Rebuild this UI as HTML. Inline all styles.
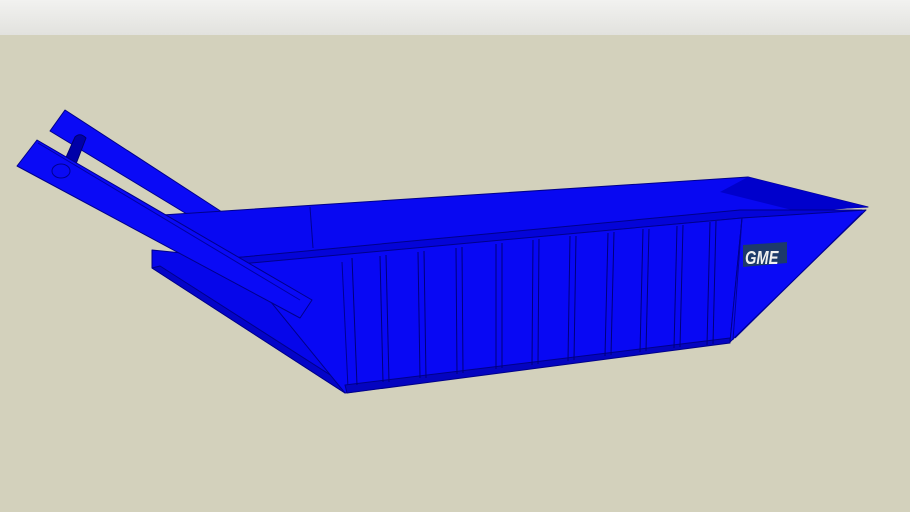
<!DOCTYPE html>
<html><head><meta charset="utf-8"><style>
html,body{margin:0;padding:0;width:910px;height:512px;overflow:hidden;background:#d3d1bc}
svg{display:block}
</style></head><body>
<svg width="910" height="512" viewBox="0 0 910 512" xmlns="http://www.w3.org/2000/svg">
<defs><linearGradient id="sky" x1="0" y1="0" x2="0" y2="1"><stop offset="0" stop-color="#f2f2f0"/><stop offset="1" stop-color="#e2e2de"/></linearGradient></defs>
<rect width="910" height="512" fill="#d3d1bc"/>
<rect width="910" height="35" fill="url(#sky)"/>
<g stroke="#00008a" stroke-width="1" stroke-linejoin="round">
<polygon points="65,110 50,131 200,222 222,212" fill="#0a0af6"/>
<path d="M64,162 L75,137 Q80,132 86,138 L76,164 Z" fill="#0000a8" stroke="#000070"/>
<polygon points="162,215 748,177 868,207 740,213 232,258 175,240" fill="#0808f2"/>
<polygon points="748,177 868,207 800,212 720,192" fill="#0000cc" stroke="none"/>
<line x1="310" y1="207" x2="313" y2="248" stroke="#000090"/>
<polygon points="152,250 152,268 345,393 345,375 232,258" fill="#0606ea"/>
<polygon points="152,268 345,393 346,385 160,266" fill="#0404c8"/>
<polygon points="232,258 740,210 862,210 862,214 742,218 240,265" fill="#0404d8"/>
<polygon points="240,264 742,218 730,342 345,393" fill="#0808f4"/>
<polygon points="742,218 866,210 730,342" fill="#0a0af6"/>
<line x1="862" y1="213" x2="735" y2="338" stroke="#00009a"/>
<line x1="742" y1="218" x2="733" y2="340" stroke="#00009a"/>
<line x1="342" y1="262" x2="348" y2="388" stroke="#000090"/>
<polygon points="345,385 730,338 730,343 347,393" fill="#0404c0"/>
<polygon points="37,140 17,166 300,318 312,300" fill="#0a0af6"/>
<line x1="38" y1="143" x2="300" y2="300" stroke="#0000a0"/>
<ellipse cx="61" cy="171" rx="9" ry="7" fill="#0a0af4" stroke="#000090"/>
</g>
<g fill="none" stroke="#00007a" stroke-width="1">
<path d="M352,258 L357,385 M380,256 L383,382 M386,255 L389,382 M418,252 L420,378 M424,251 L426,378 M456,248 L457,374 M462,247 L463,373 M496,244 L496,369 M502,243 L502,368 M533,240 L532,365 M539,239 L538,364 M570,236 L568,361 M576,236 L574,360 M608,233 L605,356 M614,232 L611,355 M643,229 L640,352 M649,229 L646,351 M677,226 L674,348 M683,225 L680,347 M710,222 L707,345 M716,221 L713,344"/>
</g>
<polygon points="743,245 787,242 787,263 743,267" fill="#1d3a6a"/>
<text x="0" y="0" transform="translate(745,264) scale(1.05,1.3)" font-family="Liberation Sans, sans-serif" font-weight="bold" font-style="italic" font-size="14" fill="#f0f0f0">GME</text>
</svg>
</body></html>
